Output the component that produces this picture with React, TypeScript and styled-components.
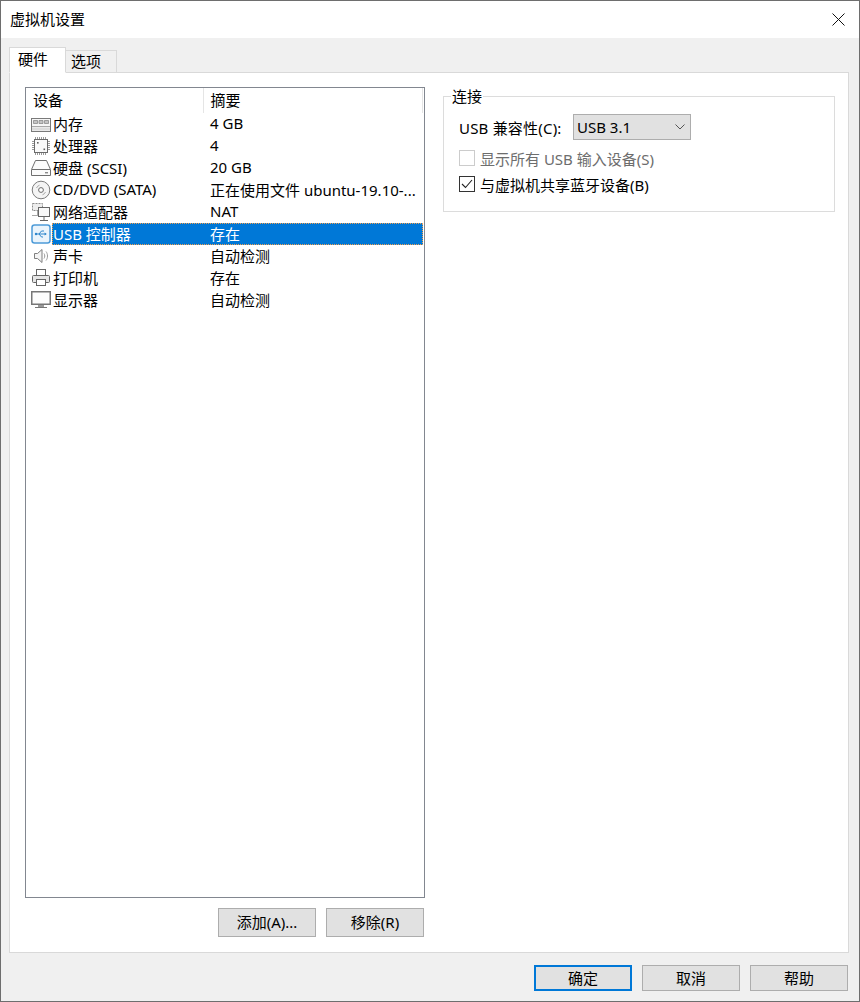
import React from "react";
import styled, { createGlobalStyle } from "styled-components";

const GlobalStyle = createGlobalStyle`
  html, body {
    margin: 0;
    padding: 0;
    background: #fff;
  }
  body {
    font-family: "Noto Sans", "Noto Sans CJK SC", sans-serif;
    font-size: 15px;
    color: #000;
  }
`;

const Window = styled.div`
  width: 860px;
  height: 1002px;
  box-sizing: border-box;
  border: 1px solid #6e6e6e;
  background: #f0f0f0;
  display: flex;
  flex-direction: column;
  overflow: hidden;
`;

const TitleBar = styled.div`
  height: 37px;
  flex: none;
  background: #fff;
  display: flex;
  align-items: center;
  justify-content: space-between;
  padding: 0 14px 0 9px;
  line-height: 37px;
`;

const Body = styled.div`
  flex: 1;
  display: flex;
  flex-direction: column;
  padding: 9px 10px 0 8px;
  min-height: 0;
`;

const TabRow = styled.div`
  display: flex;
  align-items: flex-end;
  height: 26px;
  position: relative;
  z-index: 1;
  margin-bottom: -1px;
`;

const Tab = styled.div<{ $active?: boolean }>`
  box-sizing: border-box;
  height: ${(p) => (p.$active ? "26px" : "23px")};
  width: ${(p) => (p.$active ? "57px" : "51px")};
  background: ${(p) => (p.$active ? "#fff" : "#f0f0f0")};
  border: 1px solid #d9d9d9;
  border-left-width: ${(p) => (p.$active ? "1px" : "0")};
  border-bottom-color: ${(p) => (p.$active ? "#fff" : "#d9d9d9")};
  padding-left: ${(p) => (p.$active ? "8px" : "5px")};
  line-height: ${(p) => (p.$active ? "22px" : "21px")};
`;

const Panel = styled.div`
  box-sizing: border-box;
  height: 881px;
  background: #fff;
  border: 1px solid #d9d9d9;
  padding: 14px 13px 14px 15px;
  display: grid;
  grid-template-columns: 400px 392px;
  column-gap: 18px;
`;

const LeftColumn = styled.div`
  display: flex;
  flex-direction: column;
`;

const DeviceList = styled.div`
  box-sizing: border-box;
  height: 811px;
  border: 1px solid #828790;
  background: #fff;
  padding-right: 1px;
`;

const HeaderRow = styled.div`
  display: flex;
  height: 25px;
  line-height: 25px;
`;

const HeaderCell = styled.div<{ $width: number; $pad: number }>`
  box-sizing: border-box;
  width: ${(p) => p.$width}px;
  padding-left: ${(p) => p.$pad}px;
  border-right: 1px solid #e5e5e5;
`;

const DeviceRow = styled.div`
  display: flex;
  align-items: center;
  height: 22px;
  padding-left: 5px;
`;

const IconSlot = styled.span`
  width: 20px;
  height: 20px;
  flex: none;
  margin-right: 1px;
  display: flex;
`;

const RowBody = styled.div<{ $selected?: boolean }>`
  flex: 1;
  box-sizing: border-box;
  height: 22px;
  display: flex;
  align-items: center;
  background: ${(p) => (p.$selected ? "#0078d7" : "transparent")};
  color: ${(p) => (p.$selected ? "#fff" : "#000")};
  outline: ${(p) => (p.$selected ? "1px dotted #f0a050" : "none")};
  outline-offset: -1px;
  padding: 0 0 2px 1px;
`;

const DeviceName = styled.span`
  width: 157px;
  flex: none;
  white-space: nowrap;
`;

const DeviceSummary = styled.span`
  white-space: nowrap;
`;

const ListActions = styled.div`
  display: flex;
  justify-content: flex-end;
  gap: 10px;
  margin-top: 10px;
  padding-right: 1px;
`;

const Button = styled.button<{ $primary?: boolean; $tall?: boolean }>`
  box-sizing: border-box;
  width: 98px;
  height: ${(p) => (p.$tall ? "29px" : "26px")};
  background: #e1e1e1;
  border: ${(p) => (p.$primary ? "2px solid #0078d7" : "1px solid #adadad")};
  font: inherit;
  color: #000;
  padding: 0;
  line-height: 1;
`;

const GroupBox = styled.fieldset`
  box-sizing: border-box;
  height: 126px;
  margin: -1px 0 0 0;
  border: 1px solid #dcdcdc;
  padding: 8px 15px 0;
  min-inline-size: 0;
  display: flex;
  flex-direction: column;
`;

const Legend = styled.legend`
  padding: 0 1px;
  margin-left: -8px;
  line-height: 20px;
`;

const FieldRow = styled.div`
  display: flex;
  align-items: center;
  height: 26px;
  white-space: nowrap;
`;

const FieldLabel = styled.span`
  width: 114px;
  flex: none;
  letter-spacing: 0.2px;
`;

const SelectBox = styled.div`
  box-sizing: border-box;
  width: 118px;
  height: 26px;
  background: #e1e1e1;
  border: 1px solid #adadad;
  display: flex;
  align-items: center;
  justify-content: space-between;
  padding: 0 5px 0 3px;
`;

const CheckList = styled.div`
  margin-top: 5px;
  display: flex;
  flex-direction: column;
`;

const CheckRow = styled.div<{ $disabled?: boolean }>`
  display: flex;
  align-items: center;
  gap: 5px;
  height: 26px;
  white-space: nowrap;
  color: ${(p) => (p.$disabled ? "#6d6d6d" : "#000")};
`;

const CheckBox = styled.span<{ $disabled?: boolean }>`
  box-sizing: border-box;
  width: 16px;
  height: 16px;
  flex: none;
  background: #fff;
  border: 1px solid ${(p) => (p.$disabled ? "#cccccc" : "#333")};
  display: flex;
`;

const Footer = styled.div`
  flex: 1;
  display: flex;
  justify-content: flex-end;
  align-items: flex-start;
  gap: 10px;
  padding: 12px 1px 0 0;
`;

const Svg = styled.svg`
  display: block;
`;

const icons: Record<string, React.ReactNode> = {
  memory: (
    <Svg width="20" height="20" viewBox="0 0 20 20" fill="none">
      <rect x="0.5" y="4.5" width="19" height="13" fill="#f6f6f6" stroke="#7a7a7a" />
      <path d="M2.5 6.5h4v3h-4zM8 6.5h4v3H8zM13.5 6.5h4v3h-4z" fill="#c4c4c4" stroke="#808080" strokeWidth=".7" />
      <path d="M1 12.5h18" stroke="#a8a8a8" />
      <path d="M1 15h18" stroke="#dcdcdc" strokeWidth="3" />
    </Svg>
  ),
  cpu: (
    <Svg width="20" height="20" viewBox="0 0 20 20" fill="none">
      <rect x="3.5" y="3.5" width="13" height="13" fill="#f9f9f9" stroke="#6a6a6a" />
      <path d="M4.5 1v2M6.5 1v2M8.5 1v2M10.5 1v2M12.5 1v2M14.5 1v2M4.5 17v2M6.5 17v2M8.5 17v2M10.5 17v2M12.5 17v2M14.5 17v2M1 5.5h2M1 7.5h2M1 9.5h2M1 11.5h2M1 13.5h2M17 5.5h2M17 7.5h2M17 9.5h2M17 11.5h2M17 13.5h2" stroke="#9a9a9a" />
      <rect x="6" y="6" width="1.6" height="1.6" fill="#606060" />
      <rect x="12.5" y="12.5" width="1.6" height="1.6" fill="#606060" />
    </Svg>
  ),
  disk: (
    <Svg width="20" height="20" viewBox="0 0 20 20" fill="none">
      <path d="M4.5 2.5h11l4 9v6H.5v-6z" fill="#fbfbfb" stroke="#6f6f6f" />
      <path d="M1 11.5h18" stroke="#6f6f6f" />
      <rect x="14" y="14" width="3" height="1.4" fill="#8a8a8a" />
    </Svg>
  ),
  cd: (
    <Svg width="20" height="20" viewBox="0 0 20 20" fill="none">
      <circle cx="10" cy="10" r="8.8" fill="#f4f4f4" stroke="#7c7c7c" />
      <path d="M5.5 8a5 5 0 0 1 3-2.8M14.5 12a5 5 0 0 1-3 2.8" stroke="#a8a8a8" />
      <circle cx="10" cy="10" r="2.4" fill="#fff" stroke="#6a6a6a" />
    </Svg>
  ),
  network: (
    <Svg width="20" height="20" viewBox="0 0 20 20" fill="none">
      <rect x="1.5" y="1.5" width="10" height="7" fill="#ededed" stroke="#8c8c8c" strokeDasharray="2 1" />
      <path d="M6.5 9v4M1 13.5h6" stroke="#a8a8a8" />
      <rect x="7.5" y="5.5" width="11" height="9" fill="#f8f8f8" stroke="#666" />
      <path d="M13 15v3M9 18.5h8" stroke="#666" />
    </Svg>
  ),
  usb: (
    <Svg width="20" height="20" viewBox="0 0 20 20" fill="none">
      <rect x="1" y="1" width="18" height="18" rx="2.5" fill="#eaf4fc" stroke="#4d9bd8" strokeWidth="1.5" />
      <path d="M5 10h10M8 10l2.5-3H13M8 10l2.5 3H12" stroke="#2e86cc" />
      <path d="M15.8 10l-2.2-1.5v3z" fill="#2e86cc" />
      <circle cx="5" cy="10" r="1.2" fill="#2e86cc" />
    </Svg>
  ),
  sound: (
    <Svg width="20" height="20" viewBox="0 0 20 20" fill="none">
      <path d="M3.5 7.5h3l4.5-4v13l-4.5-4h-3z" fill="#f4f4f4" stroke="#7f7f7f" />
      <path d="M13 7.5c1 1.5 1 3.5 0 5M15 5.5c2 2.5 2 6.5 0 9" stroke="#9a9a9a" />
    </Svg>
  ),
  printer: (
    <Svg width="20" height="20" viewBox="0 0 20 20" fill="none">
      <rect x="5.5" y="1.5" width="9" height="6" fill="#fff" stroke="#666" />
      <rect x="1.5" y="7.5" width="17" height="7" rx="1" fill="#e6e6e6" stroke="#666" />
      <rect x="5.5" y="11.5" width="9" height="6" fill="#fff" stroke="#666" />
    </Svg>
  ),
  display: (
    <Svg width="20" height="20" viewBox="0 0 20 20" fill="none">
      <rect x="0.75" y="1.75" width="18.5" height="12.5" fill="#fdfdfd" stroke="#777" strokeWidth="1.5" />
      <path d="M7 15h6v2H7z" fill="#999" />
      <path d="M4 17.5h12" stroke="#777" />
    </Svg>
  ),
};

const devices = [
  { icon: "memory", name: "内存", summary: "4 GB" },
  { icon: "cpu", name: "处理器", summary: "4" },
  { icon: "disk", name: "硬盘 (SCSI)", summary: "20 GB" },
  { icon: "cd", name: "CD/DVD (SATA)", summary: "正在使用文件 ubuntu-19.10-..." },
  { icon: "network", name: "网络适配器", summary: "NAT" },
  { icon: "usb", name: "USB 控制器", summary: "存在", selected: true },
  { icon: "sound", name: "声卡", summary: "自动检测" },
  { icon: "printer", name: "打印机", summary: "存在" },
  { icon: "display", name: "显示器", summary: "自动检测" },
];

const App = () => {
  return (
    <Window>
      <GlobalStyle />
      <TitleBar>
        <span>虚拟机设置</span>
        <Svg width="13" height="13" viewBox="0 0 13 13" fill="none">
          <path d="M.5.5l12 12M12.5.5l-12 12" stroke="#111" />
        </Svg>
      </TitleBar>
      <Body>
        <TabRow>
          <Tab $active>硬件</Tab>
          <Tab>选项</Tab>
        </TabRow>
        <Panel>
          <LeftColumn>
            <DeviceList>
              <HeaderRow>
                <HeaderCell $width={178} $pad={7}>设备</HeaderCell>
                <HeaderCell $width={220} $pad={7}>摘要</HeaderCell>
              </HeaderRow>
              {devices.map((d) => (
                <DeviceRow key={d.icon}>
                  <IconSlot>{icons[d.icon]}</IconSlot>
                  <RowBody $selected={d.selected}>
                    <DeviceName>{d.name}</DeviceName>
                    <DeviceSummary>{d.summary}</DeviceSummary>
                  </RowBody>
                </DeviceRow>
              ))}
            </DeviceList>
            <ListActions>
              <Button $tall>添加(A)...</Button>
              <Button $tall>移除(R)</Button>
            </ListActions>
          </LeftColumn>
          <GroupBox>
            <Legend>连接</Legend>
            <FieldRow>
              <FieldLabel>USB 兼容性(C):</FieldLabel>
              <SelectBox>
                <span>USB 3.1</span>
                <Svg width="10" height="6" viewBox="0 0 10 6" fill="none">
                  <path d="M.5.5l4.5 4.5 4.5-4.5" stroke="#555" />
                </Svg>
              </SelectBox>
            </FieldRow>
            <CheckList>
              <CheckRow $disabled>
                <CheckBox $disabled />
                <span>显示所有 USB 输入设备(S)</span>
              </CheckRow>
              <CheckRow>
                <CheckBox>
                  <Svg width="14" height="14" viewBox="0 0 14 14" fill="none">
                    <path d="M2 7l3.5 3.5L12 3" stroke="#222" strokeWidth="1.1" />
                  </Svg>
                </CheckBox>
                <span>与虚拟机共享蓝牙设备(B)</span>
              </CheckRow>
            </CheckList>
          </GroupBox>
        </Panel>
        <Footer>
          <Button $primary>确定</Button>
          <Button>取消</Button>
          <Button>帮助</Button>
        </Footer>
      </Body>
    </Window>
  );
};

export default App;
